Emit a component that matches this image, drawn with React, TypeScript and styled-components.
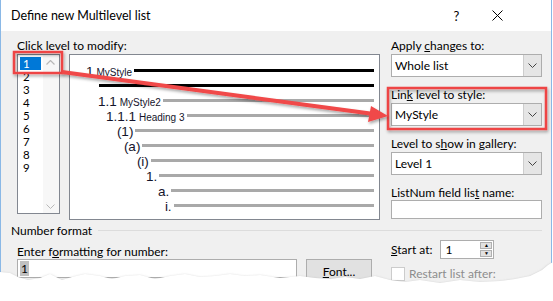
import React from 'react';
import styled, { createGlobalStyle } from 'styled-components';

const GlobalStyle = createGlobalStyle`
  html, body {
    margin: 0;
    padding: 0;
    background: #ffffff;
  }
  body {
    font-family: Lato, 'Noto Sans', 'Liberation Sans', sans-serif;
    font-size: 12px;
    color: #000;
  }
`;

const Stage = styled.div`
  position: relative;
  width: 553px;
  height: 301px;
  overflow: hidden;
  background: #fff;
`;

const Window = styled.div`
  width: 550px;
  height: 301px;
  border-left: 1px solid #8ab8e6;
  border-right: 1px solid #8ab8e6;
  display: flex;
  flex-direction: column;
`;

const TitleBar = styled.div`
  height: 31px;
  flex: none;
  background: #fff;
  display: flex;
  align-items: center;
  padding: 0 33px 0 10px;
  font-size: 12.5px;
`;

const Title = styled.span`
  flex: 1;
`;

const TitleButton = styled.span`
  width: 41px;
  display: flex;
  justify-content: center;
  align-items: center;
  font-size: 13px;
`;

const Body = styled.div`
  flex: 1;
  background: #f0f0f0;
  padding: 7px 9px 0 16px;
  display: flex;
  flex-direction: column;
`;

const TopRow = styled.div`
  display: flex;
  gap: 11px;
`;

const LeftCol = styled.div`
  display: flex;
  flex-direction: column;
  width: 363px;
`;

const Label = styled.div<{ $muted?: boolean }>`
  height: 15px;
  line-height: 15px;
  white-space: nowrap;
  color: ${({ $muted }) => ($muted ? '#8d8d8d' : '#000')};
`;

const LevelRow = styled.div`
  display: flex;
  gap: 9px;
  margin-top: 1px;
`;

const LevelList = styled.div`
  width: 41px;
  height: 158px;
  border: 1px solid #828790;
  background: #fff;
  display: flex;
`;

const LevelItems = styled.div`
  width: 23px;
  padding: 2px 0 0 2px;
  display: flex;
  flex-direction: column;
`;

const LevelItem = styled.div<{ $selected?: boolean }>`
  height: 13px;
  line-height: 13px;
  font-size: 11.5px;
  padding-left: 3px;
  width: 18px;
  overflow: hidden;
  background: ${({ $selected }) => ($selected ? '#0078d7' : 'transparent')};
  color: ${({ $selected }) => ($selected ? '#fff' : '#000')};
`;

const ScrollBar = styled.div`
  flex: 1;
  background: #f7f7f7;
  display: flex;
  flex-direction: column;
  justify-content: space-between;
  align-items: center;
  padding: 5px 0 4px;
`;

const Preview = styled.div`
  border: 1px solid #828790;
  background: #fff;
  padding: 8px 5px 0 0;
  box-sizing: border-box;
  width: 312px;
  height: 166px;
  display: flex;
  flex-direction: column;
`;

const PreviewRow = styled.div<{ $indent: number }>`
  height: 15px;
  display: flex;
  align-items: center;
  padding-left: ${({ $indent }) => $indent}px;
  font-family: 'Liberation Sans', Arial, sans-serif;
  color: #14142b;
  white-space: nowrap;
`;

const Num = styled.span`
  font-size: 13.5px;
  line-height: 15px;
  margin-top: 2px;
`;

const StyleName = styled.span`
  font-size: 10px;
  margin-left: 3px;
  margin-top: 4px;
`;

const Rule = styled.div<{ $dark?: boolean }>`
  flex: 1;
  height: 3px;
  margin-left: 2px;
  background: ${({ $dark }) => ($dark ? '#000' : '#a9a9a9')};
`;

const RightCol = styled.div`
  display: flex;
  flex-direction: column;
  width: 153px;
`;

const Combo = styled.div`
  height: 21px;
  border: 1px solid #adadad;
  background: #fff;
  display: flex;
  margin: 1px 0 10px;
`;

const ComboText = styled.div`
  flex: 1;
  padding-left: 3px;
  line-height: 21px;
`;

const ComboButton = styled.div`
  width: 17px;
  background: #e5e5e5;
  border-left: 1px solid #cdcdcd;
  display: flex;
  align-items: center;
  justify-content: center;
`;

const TextBox = styled.div<{ $width?: number }>`
  height: 17px;
  width: ${({ $width }) => ($width ? `${$width}px` : 'auto')};
  border: 1px solid #adadad;
  background: #fff;
  display: flex;
  align-items: center;
  padding-left: 2px;
`;

const GroupHeader = styled.div`
  display: flex;
  align-items: center;
  margin: 3px 0 0 -6px;
  height: 15px;
  gap: 6px;
`;

const GroupLine = styled.div`
  flex: 1;
  height: 1px;
  background: #dcdcdc;
`;

const BottomRow = styled.div`
  display: flex;
  gap: 11px;
`;

const FormatCol = styled.div`
  width: 363px;
  display: flex;
  flex-direction: column;
  padding-top: 6px;
`;

const FormatInputs = styled.div`
  display: flex;
  gap: 9px;
`;

const SelectedChar = styled.span`
  background: #c0c0c0;
  padding: 0 1px;
`;

const Button = styled.div`
  width: 64px;
  height: 22px;
  background: #e1e1e1;
  border: 1px solid #adadad;
  display: flex;
  align-items: center;
  justify-content: center;
`;

const StartCol = styled.div`
  display: flex;
  flex-direction: column;
  padding-top: 2px;
  gap: 7px;
`;

const StartRow = styled.div`
  display: flex;
  align-items: center;
  gap: 8px;
`;

const Spin = styled.div`
  width: 52px;
  height: 17px;
  border: 1px solid #adadad;
  background: #fff;
  display: flex;
`;

const SpinValue = styled.div`
  flex: 1;
  padding-left: 4px;
  line-height: 18px;
`;

const SpinButtons = styled.div`
  width: 12px;
  display: flex;
  flex-direction: column;
  gap: 1px;
  padding: 1px;
`;

const SpinButton = styled.div`
  flex: 1;
  background: #e1e1e1;
  border: 1px solid #b0b0b0;
  display: flex;
  align-items: center;
  justify-content: center;
  font-size: 5px;
  line-height: 5px;
`;

const CheckRow = styled.div`
  display: flex;
  align-items: center;
  gap: 4px;
`;

const CheckBox = styled.div`
  width: 12px;
  height: 12px;
  border: 1px solid #cccccc;
  background: #fff;
`;

const Overlay = styled.svg`
  position: absolute;
  left: 0;
  top: 0;
  pointer-events: none;
`;

const Key = styled.u``;

const Chevron = ({ color = '#444' }: { color?: string }) => (
  <svg width="9" height="5" viewBox="0 0 9 5">
    <path d="M0.5 0.5 L4.5 4.5 L8.5 0.5" fill="none" stroke={color} strokeWidth="1" />
  </svg>
);

const ChevronUp = () => (
  <svg width="9" height="5" viewBox="0 0 9 5">
    <path d="M0.5 4.5 L4.5 0.5 L8.5 4.5" fill="none" stroke="#b8b8b8" strokeWidth="1.2" />
  </svg>
);

const previewRows = [
  { indent: 16, num: '1', name: 'MyStyle', dark: true },
  { indent: 27, dark: true },
  { indent: 28, num: '1.1', name: 'MyStyle2' },
  { indent: 36, num: '1.1.1', name: 'Heading 3' },
  { indent: 47, num: '(1)' },
  { indent: 54, num: '(a)' },
  { indent: 67, num: '(i)' },
  { indent: 76, num: '1.' },
  { indent: 88, num: 'a.' },
  { indent: 95, num: 'i.' },
];

const tear =
  '0,272 10,273 18,277 28,280 40,278 50,274 62,280 72,277 85,274 100,276 112,279 125,276 140,275 155,279 170,276 185,274 200,277 215,276 230,274 245,276 260,275 280,278 300,276 315,278 330,279 345,277 360,279 375,276 390,280 405,282 420,280 440,283 460,280 480,282 500,281 515,279 530,276 542,270 548,265 553,262 553,301 0,301';

export default function App() {
  return (
    <Stage>
      <GlobalStyle />
      <Window>
        <TitleBar>
          <Title>Define new Multilevel list</Title>
          <TitleButton>?</TitleButton>
          <TitleButton>
            <svg width="11" height="11" viewBox="0 0 11 11">
              <path d="M0.5 0.5 L10.5 10.5 M10.5 0.5 L0.5 10.5" stroke="#000" strokeWidth="1" />
            </svg>
          </TitleButton>
        </TitleBar>
        <Body>
          <TopRow>
            <LeftCol>
              <Label>
                Click le<Key>v</Key>el to modify:
              </Label>
              <LevelRow>
                <LevelList>
                  <LevelItems>
                    {['1', '2', '3', '4', '5', '6', '7', '8', '9'].map((n) => (
                      <LevelItem key={n} $selected={n === '1'}>
                        {n}
                      </LevelItem>
                    ))}
                  </LevelItems>
                  <ScrollBar>
                    <ChevronUp />
                    <Chevron color="#b8b8b8" />
                  </ScrollBar>
                </LevelList>
                <Preview>
                  {previewRows.map((r, i) => (
                    <PreviewRow key={i} $indent={r.indent}>
                      {r.num && <Num>{r.num}</Num>}
                      {r.name && <StyleName>{r.name}</StyleName>}
                      <Rule $dark={r.dark} />
                    </PreviewRow>
                  ))}
                </Preview>
              </LevelRow>
            </LeftCol>
            <RightCol>
              <Label>
                Apply <Key>c</Key>hanges to:
              </Label>
              <Combo>
                <ComboText>Whole list</ComboText>
                <ComboButton>
                  <Chevron />
                </ComboButton>
              </Combo>
              <Label>
                Lin<Key>k</Key> level to style:
              </Label>
              <Combo>
                <ComboText>MyStyle</ComboText>
                <ComboButton>
                  <Chevron />
                </ComboButton>
              </Combo>
              <Label>
                Level to s<Key>h</Key>ow in gallery:
              </Label>
              <Combo>
                <ComboText>Level 1</ComboText>
                <ComboButton>
                  <Chevron />
                </ComboButton>
              </Combo>
              <Label>
                ListNum field lis<Key>t</Key> name:
              </Label>
              <TextBox />
            </RightCol>
          </TopRow>
          <GroupHeader>
            <span>Number format</span>
            <GroupLine />
          </GroupHeader>
          <BottomRow>
            <FormatCol>
              <Label>
                Enter f<Key>o</Key>rmatting for number:
              </Label>
              <FormatInputs>
                <TextBox $width={276}>
                  <SelectedChar>1</SelectedChar>
                </TextBox>
                <Button>
                  <span>
                    <Key>F</Key>ont...
                  </span>
                </Button>
              </FormatInputs>
            </FormatCol>
            <StartCol>
              <StartRow>
                <Label>
                  <Key>S</Key>tart at:
                </Label>
                <Spin>
                  <SpinValue>1</SpinValue>
                  <SpinButtons>
                    <SpinButton>▲</SpinButton>
                    <SpinButton>▼</SpinButton>
                  </SpinButtons>
                </Spin>
              </StartRow>
              <CheckRow>
                <CheckBox />
                <Label $muted>Restart list after:</Label>
              </CheckRow>
            </StartCol>
          </BottomRow>
        </Body>
      </Window>
      <Overlay width="553" height="301" viewBox="0 0 553 301">
        <defs>
          <filter id="shadow" x="-10%" y="-50%" width="120%" height="200%">
            <feGaussianBlur stdDeviation="1.5" />
          </filter>
          <filter id="arrowShadow" x="-10%" y="-50%" width="120%" height="200%">
            <feDropShadow dx="1" dy="2" stdDeviation="1.5" floodColor="#000" floodOpacity="0.35" />
          </filter>
        </defs>
        <polygon points={tear} fill="#8a8a8a" transform="translate(0,1.5)" filter="url(#shadow)" />
        <polygon points={tear} fill="#fff" />
        <g fill="none" stroke="#ee4444" strokeWidth="2.5" filter="url(#arrowShadow)">
          <rect x="14" y="52" width="48" height="21" />
          <rect x="388" y="88" width="158" height="41" />
        </g>
        <g filter="url(#arrowShadow)">
          <line x1="62" y1="72" x2="374" y2="114" stroke="#f04848" strokeWidth="4" />
          <polygon points="388,116 371,106 368,122" fill="#f04848" />
        </g>
      </Overlay>
    </Stage>
  );
}
